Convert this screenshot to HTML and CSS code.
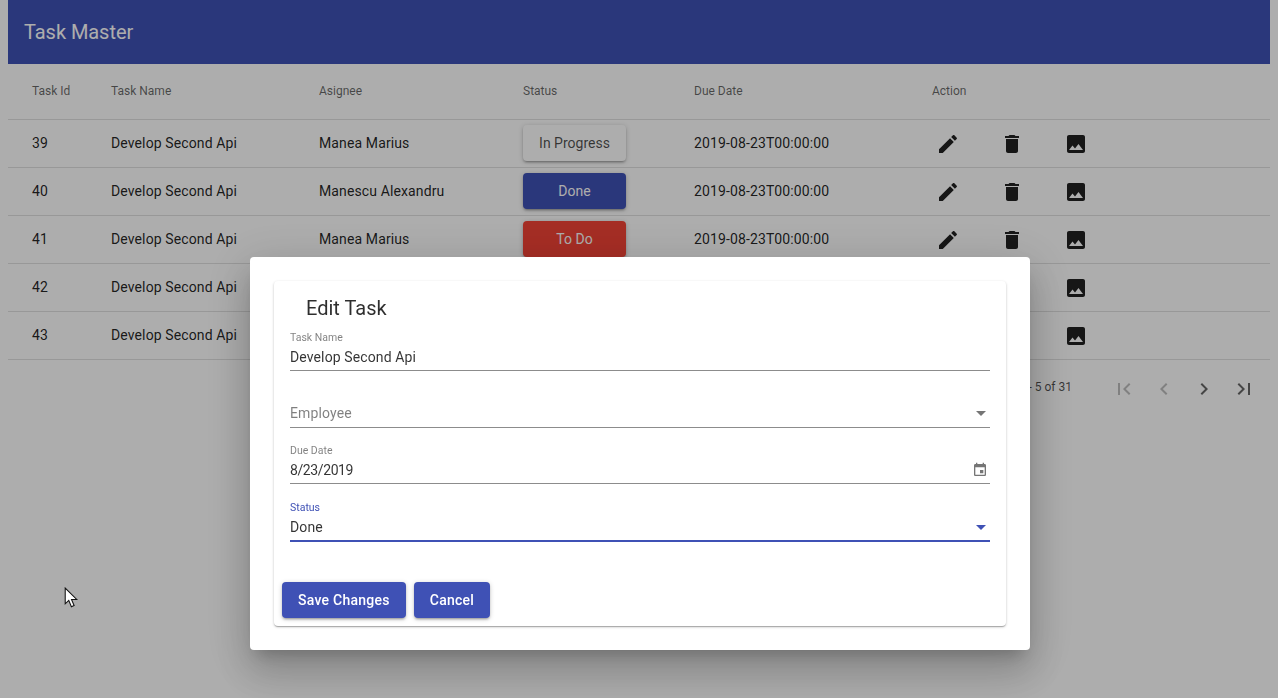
FILE: index.html
```html
<!DOCTYPE html>
<html lang="en">
<head>
  <meta charset="UTF-8">
  <title>Task Master</title>
  <link rel="stylesheet" href="styles.css">
</head>
<body>
  <svg class="sprite" xmlns="http://www.w3.org/2000/svg">
    <symbol id="i-edit" viewBox="0 0 24 24"><path d="M3 17.25V21h3.75L17.81 9.94l-3.75-3.75L3 17.25zM20.71 7.04c.39-.39.39-1.02 0-1.41l-2.34-2.34c-.39-.39-1.02-.39-1.41 0l-1.83 1.83 3.75 3.75 1.83-1.83z"/></symbol>
    <symbol id="i-delete" viewBox="0 0 24 24"><path d="M6 19c0 1.1.9 2 2 2h8c1.1 0 2-.9 2-2V7H6v12zM19 4h-3.5l-1-1h-5l-1 1H5v2h14V4z"/></symbol>
    <symbol id="i-image" viewBox="0 0 24 24"><path d="M21 19V5c0-1.1-.9-2-2-2H5c-1.1 0-2 .9-2 2v14c0 1.1.9 2 2 2h14c1.1 0 2-.9 2-2zM8.5 13.5l2.5 3.01L14.5 12l4.5 6H5l3.5-4.5z"/></symbol>
    <symbol id="i-first" viewBox="0 0 24 24"><path d="M18.41 16.59L13.82 12l4.59-4.59L17 6l-6 6 6 6zM6 6h2v12H6z"/></symbol>
    <symbol id="i-prev" viewBox="0 0 24 24"><path d="M15.41 7.41L14 6l-6 6 6 6 1.41-1.41L10.83 12z"/></symbol>
    <symbol id="i-next" viewBox="0 0 24 24"><path d="M10 6L8.59 7.41 13.17 12l-4.58 4.59L10 18l6-6z"/></symbol>
    <symbol id="i-last" viewBox="0 0 24 24"><path d="M5.59 7.41L10.18 12l-4.59 4.59L7 18l6-6-6-6zM16 6h2v12h-2z"/></symbol>
    <symbol id="i-drop" viewBox="0 0 24 24"><path d="M7 10l5 5 5-5z"/></symbol>
    <symbol id="i-date" viewBox="0 0 24 24"><path d="M17 12h-5v5h5v-5zM16 1v2H8V1H6v2H5c-1.11 0-1.99.9-1.99 2L3 19c0 1.1.89 2 2 2h14c1.1 0 2-.9 2-2V5c0-1.1-.9-2-2-2h-1V1h-2zm3 18H5V8h14v11z"/></symbol>
  </svg>

  <header class="topbar">Task Master</header>

  <main class="paper">
    <table class="tasks">
      <colgroup>
        <col class="col-id"><col class="col-name"><col class="col-user"><col class="col-status"><col class="col-date"><col>
      </colgroup>
      <thead>
        <tr><th>Task Id</th><th>Task Name</th><th>Asignee</th><th>Status</th><th>Due Date</th><th>Action</th></tr>
      </thead>
      <tbody>
        <tr>
          <td>39</td><td>Develop Second Api</td><td>Manea Marius</td>
          <td><button class="status status-progress">In Progress</button></td>
          <td>2019-08-23T00:00:00</td>
          <td><div class="actions"><svg class="icon"><use href="#i-edit"/></svg><svg class="icon"><use href="#i-delete"/></svg><svg class="icon"><use href="#i-image"/></svg></div></td>
        </tr>
        <tr>
          <td>40</td><td>Develop Second Api</td><td>Manescu Alexandru</td>
          <td><button class="status status-done">Done</button></td>
          <td>2019-08-23T00:00:00</td>
          <td><div class="actions"><svg class="icon"><use href="#i-edit"/></svg><svg class="icon"><use href="#i-delete"/></svg><svg class="icon"><use href="#i-image"/></svg></div></td>
        </tr>
        <tr>
          <td>41</td><td>Develop Second Api</td><td>Manea Marius</td>
          <td><button class="status status-todo">To Do</button></td>
          <td>2019-08-23T00:00:00</td>
          <td><div class="actions"><svg class="icon"><use href="#i-edit"/></svg><svg class="icon"><use href="#i-delete"/></svg><svg class="icon"><use href="#i-image"/></svg></div></td>
        </tr>
        <!-- the dialog covers the middle of these two rows -->
        <tr>
          <td>42</td><td>Develop Second Api</td><td></td><td></td><td></td>
          <td><div class="actions actions-end"><svg class="icon"><use href="#i-image"/></svg></div></td>
        </tr>
        <tr>
          <td>43</td><td>Develop Second Api</td><td></td><td></td><td></td>
          <td><div class="actions actions-end"><svg class="icon"><use href="#i-image"/></svg></div></td>
        </tr>
      </tbody>
    </table>
  </main>

  <div class="pager">
    <span class="pager-text">1 - 5 of 31</span>
    <div class="pager-buttons">
      <svg class="icon icon-off"><use href="#i-first"/></svg>
      <svg class="icon icon-off"><use href="#i-prev"/></svg>
      <svg class="icon icon-on"><use href="#i-next"/></svg>
      <svg class="icon icon-on"><use href="#i-last"/></svg>
    </div>
  </div>

  <div class="backdrop"></div>

  <div class="dialog">
    <form class="card">
      <h2 class="card-title">Edit Task</h2>
      <div class="fields">
        <div class="field">
          <label class="field-label">Task Name</label>
          <div class="field-value">Develop Second Api</div>
        </div>
        <div class="field field-empty">
          <div class="field-value field-placeholder">Employee<svg class="drop"><use href="#i-drop"/></svg></div>
        </div>
        <div class="field">
          <label class="field-label">Due Date</label>
          <div class="field-value field-date">8/23/2019<svg class="date"><use href="#i-date"/></svg></div>
        </div>
        <div class="field field-focus">
          <label class="field-label">Status</label>
          <div class="field-value">Done<svg class="drop"><use href="#i-drop"/></svg></div>
        </div>
      </div>
      <div class="card-actions">
        <button type="button" class="primary">Save Changes</button>
        <button type="button" class="primary">Cancel</button>
      </div>
    </form>
  </div>

  <svg class="cursor" width="15" height="22" viewBox="0 0 14 21"><path d="M1 1v15l3.4-3.2 2.5 6 2.6-1.1-2.5-5.8H12z" fill="#fff" stroke="#111" stroke-width="1"/></svg>
</body>
</html>
```

FILE: styles.css
```css
body {
  margin: 0 8px;
  font-family: Roboto, "Liberation Sans", sans-serif;
  font-size: 14px;
  letter-spacing: 0.12px;
  color: rgba(0,0,0,0.87);
  background-color: #fff;
}

.sprite {
  display: none;
}

.topbar {
  height: 64px;
  padding-left: 16px;
  display: flex;
  align-items: center;
  background-color: #3f51b5;
  color: #fff;
  font-size: 20px;
  letter-spacing: -0.05px;
  position: relative;
  z-index: 1;
}

.paper {
  height: 296px;
  box-shadow: 0 5px 5px -3px rgba(0,0,0,0.2), 0 8px 10px 1px rgba(0,0,0,0.14), 0 3px 14px 2px rgba(0,0,0,0.12), 0 0 10px 1px rgba(0,0,0,0.3);
}

.tasks {
  width: 100%;
  table-layout: fixed;
  border-collapse: collapse;
}

.col-id { width: 103px; }
.col-name { width: 208px; }
.col-user { width: 204px; }
.col-status { width: 171px; }
.col-date { width: 238px; }

.tasks th, .tasks td {
  padding: 0 0 1px;
  text-align: left;
  border-bottom: 1px solid #e0e0e0;
}

.tasks th {
  height: 54px;
  font-size: 12px;
  font-weight: 400;
  letter-spacing: 0;
  color: rgba(0,0,0,0.6);
}

.tasks td {
  height: 46px;
}

.tasks th:first-child, .tasks td:first-child {
  padding-left: 24px;
}

.status {
  display: block;
  width: 103px;
  height: 36px;
  border: none;
  border-radius: 4px;
  font-family: inherit;
  font-size: 14px;
  box-shadow: 0 1px 5px 0 rgba(0,0,0,0.2), 0 2px 2px 0 rgba(0,0,0,0.14), 0 3px 1px -2px rgba(0,0,0,0.12);
}

.status-progress {
  background-color: #fff;
  color: rgba(0,0,0,0.7);
}

.status-done {
  background-color: #3f51b5;
  color: #fff;
}

.status-todo {
  background-color: #f44336;
  color: #fff;
}

.actions {
  display: flex;
  gap: 40px;
  padding: 2px 0 0 4px;
}

.actions-end {
  padding-left: 132px;
}

.icon {
  display: block;
  width: 24px;
  height: 24px;
  flex: none;
  fill: rgba(0,0,0,0.87);
}

/* white strip hides the table shadow under the rows */
.pager {
  height: 56px;
  display: flex;
  align-items: center;
  justify-content: flex-end;
  position: relative;
  background-color: #fff;
  font-size: 12px;
  letter-spacing: 0;
  color: rgba(0,0,0,0.7);
}

.pager-text {
  margin-right: 40px;
  margin-top: -2px;
}

.pager-buttons {
  display: flex;
  gap: 16px;
  padding-right: 14px;
  margin-top: 2px;
}

.icon-off {
  fill: rgba(0,0,0,0.26);
}

.icon-on {
  fill: rgba(0,0,0,0.6);
}

/* modal */
.backdrop {
  position: fixed;
  top: 0;
  right: 0;
  bottom: 0;
  left: 0;
  z-index: 5;
  background-color: rgba(0,0,0,0.32);
}

.dialog {
  position: fixed;
  top: 257px;
  left: 250px;
  z-index: 6;
  width: 780px;
  height: 393px;
  padding: 24px;
  box-sizing: border-box;
  background-color: #fff;
  border-radius: 4px;
  box-shadow: 0 11px 15px -7px rgba(0,0,0,0.2), 0 24px 38px 3px rgba(0,0,0,0.14), 0 9px 46px 8px rgba(0,0,0,0.12);
}

.card {
  height: 345px;
  border-radius: 4px;
  box-shadow: 0 1px 3px 0 rgba(0,0,0,0.2), 0 1px 1px 0 rgba(0,0,0,0.14), 0 2px 1px -1px rgba(0,0,0,0.12);
}

.card-title {
  margin: 0;
  padding: 16px 0 0 32px;
  height: 26px;
  font-size: 20px;
  font-weight: 400;
  letter-spacing: 0;
  line-height: 22px;
  color: rgba(0,0,0,0.82);
}

.fields {
  padding: 0 16px;
}

.field {
  height: 48px;
  margin-top: 8px;
  display: flex;
  flex-direction: column;
  justify-content: flex-end;
  border-bottom: 1px solid #8c8c8c;
  box-sizing: border-box;
}

.field:first-child {
  margin-top: 0;
}

.field-empty {
  height: 49px;
}

.field-empty .field-value {
  padding-bottom: 2px;
}

.field-focus {
  height: 50px;
  border-bottom: 2px solid #3f51b5;
}

.field-focus .field-label {
  color: #3f51b5;
}

.field-focus .drop {
  fill: #3f51b5;
}

.field-label {
  font-size: 10.5px;
  line-height: 12px;
  letter-spacing: 0;
  color: rgba(0,0,0,0.5);
}

.field-value {
  height: 24px;
  display: flex;
  align-items: center;
  justify-content: space-between;
  margin-top: 1px;
  padding-bottom: 1px;
  color: rgba(0,0,0,0.8);
}

.field-date {
  letter-spacing: -0.4px;
}

.field-value.field-placeholder {
  color: rgba(0,0,0,0.5);
}

.drop {
  width: 24px;
  height: 24px;
  flex: none;
  margin-right: -3px;
  fill: rgba(0,0,0,0.54);
}

.date {
  width: 16px;
  height: 16px;
  flex: none;
  margin-right: 2px;
  fill: rgba(0,0,0,0.54);
}

.card-actions {
  display: flex;
  gap: 8px;
  padding: 40px 8px 8px;
}

.primary {
  height: 36px;
  padding: 0 16px;
  border: none;
  border-radius: 4px;
  background-color: #3f51b5;
  color: #fff;
  font-family: inherit;
  font-size: 14px;
  font-weight: 500;
  letter-spacing: 0.26px;
  box-shadow: 0 1px 5px 0 rgba(0,0,0,0.2), 0 2px 2px 0 rgba(0,0,0,0.14), 0 3px 1px -2px rgba(0,0,0,0.12);
}

.cursor {
  position: fixed;
  top: 587px;
  left: 64px;
  z-index: 7;
}
```
